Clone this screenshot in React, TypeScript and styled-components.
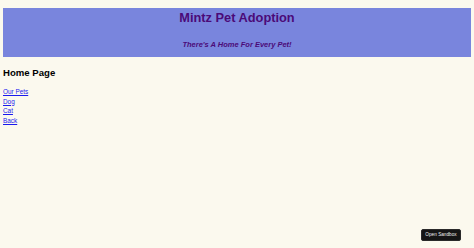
import React from "react";
import styled, { createGlobalStyle } from "styled-components";

const GlobalStyle = createGlobalStyle`
  html, body {
    margin: 0;
    padding: 0;
    background: #fbf9ee;
  }
  body {
    font-family: "Liberation Sans", Arial, sans-serif;
    width: 474px;
    height: 248px;
    overflow: hidden;
  }
`;

const Page = styled.div`
  position: relative;
  height: 248px;
  padding: 8px 3px 0 3px;
  box-sizing: border-box;
`;

const Header = styled.header`
  background: #7985dd;
  height: 49px;
  box-sizing: border-box;
  padding-top: 2px;
  display: flex;
  flex-direction: column;
  align-items: center;
`;

const Title = styled.h1`
  margin: 0;
  font-size: 12.8px;
  line-height: 16px;
  font-weight: bold;
  color: #4b0a78;
`;

const Subtitle = styled.h3`
  margin: 14px 0 0 0;
  font-size: 7.5px;
  line-height: 9px;
  font-weight: bold;
  font-style: italic;
  color: #4b0a78;
`;

const Heading = styled.h2`
  margin: 10px 0 0 0;
  font-size: 9.6px;
  line-height: 11px;
  font-weight: bold;
  color: #000;
`;

const Nav = styled.nav`
  display: flex;
  flex-direction: column;
  align-items: flex-start;
  margin-top: 9px;
`;

const NavLink = styled.a`
  font-size: 6.4px;
  line-height: 9.6px;
  color: #1a1aee;
  text-decoration: underline;
`;

const SandboxButton = styled.button`
  position: absolute;
  right: 13px;
  bottom: 7px;
  width: 40px;
  height: 12px;
  padding: 0;
  border: 1px solid #2a2a2a;
  border-radius: 2px;
  background: #151515;
  color: #f0f0f0;
  font-family: "Liberation Sans", Arial, sans-serif;
  font-size: 4.7px;
  line-height: 10px;
  cursor: pointer;
`;

export default function App() {
  return (
    <>
      <GlobalStyle />
      <Page>
        <Header>
          <Title>Mintz Pet Adoption</Title>
          <Subtitle>There's A Home For Every Pet!</Subtitle>
        </Header>
        <Heading>Home Page</Heading>
        <Nav>
          <NavLink href="#">Our Pets</NavLink>
          <NavLink href="#">Dog</NavLink>
          <NavLink href="#">Cat</NavLink>
          <NavLink href="#">Back</NavLink>
        </Nav>
        <SandboxButton>Open Sandbox</SandboxButton>
      </Page>
    </>
  );
}
